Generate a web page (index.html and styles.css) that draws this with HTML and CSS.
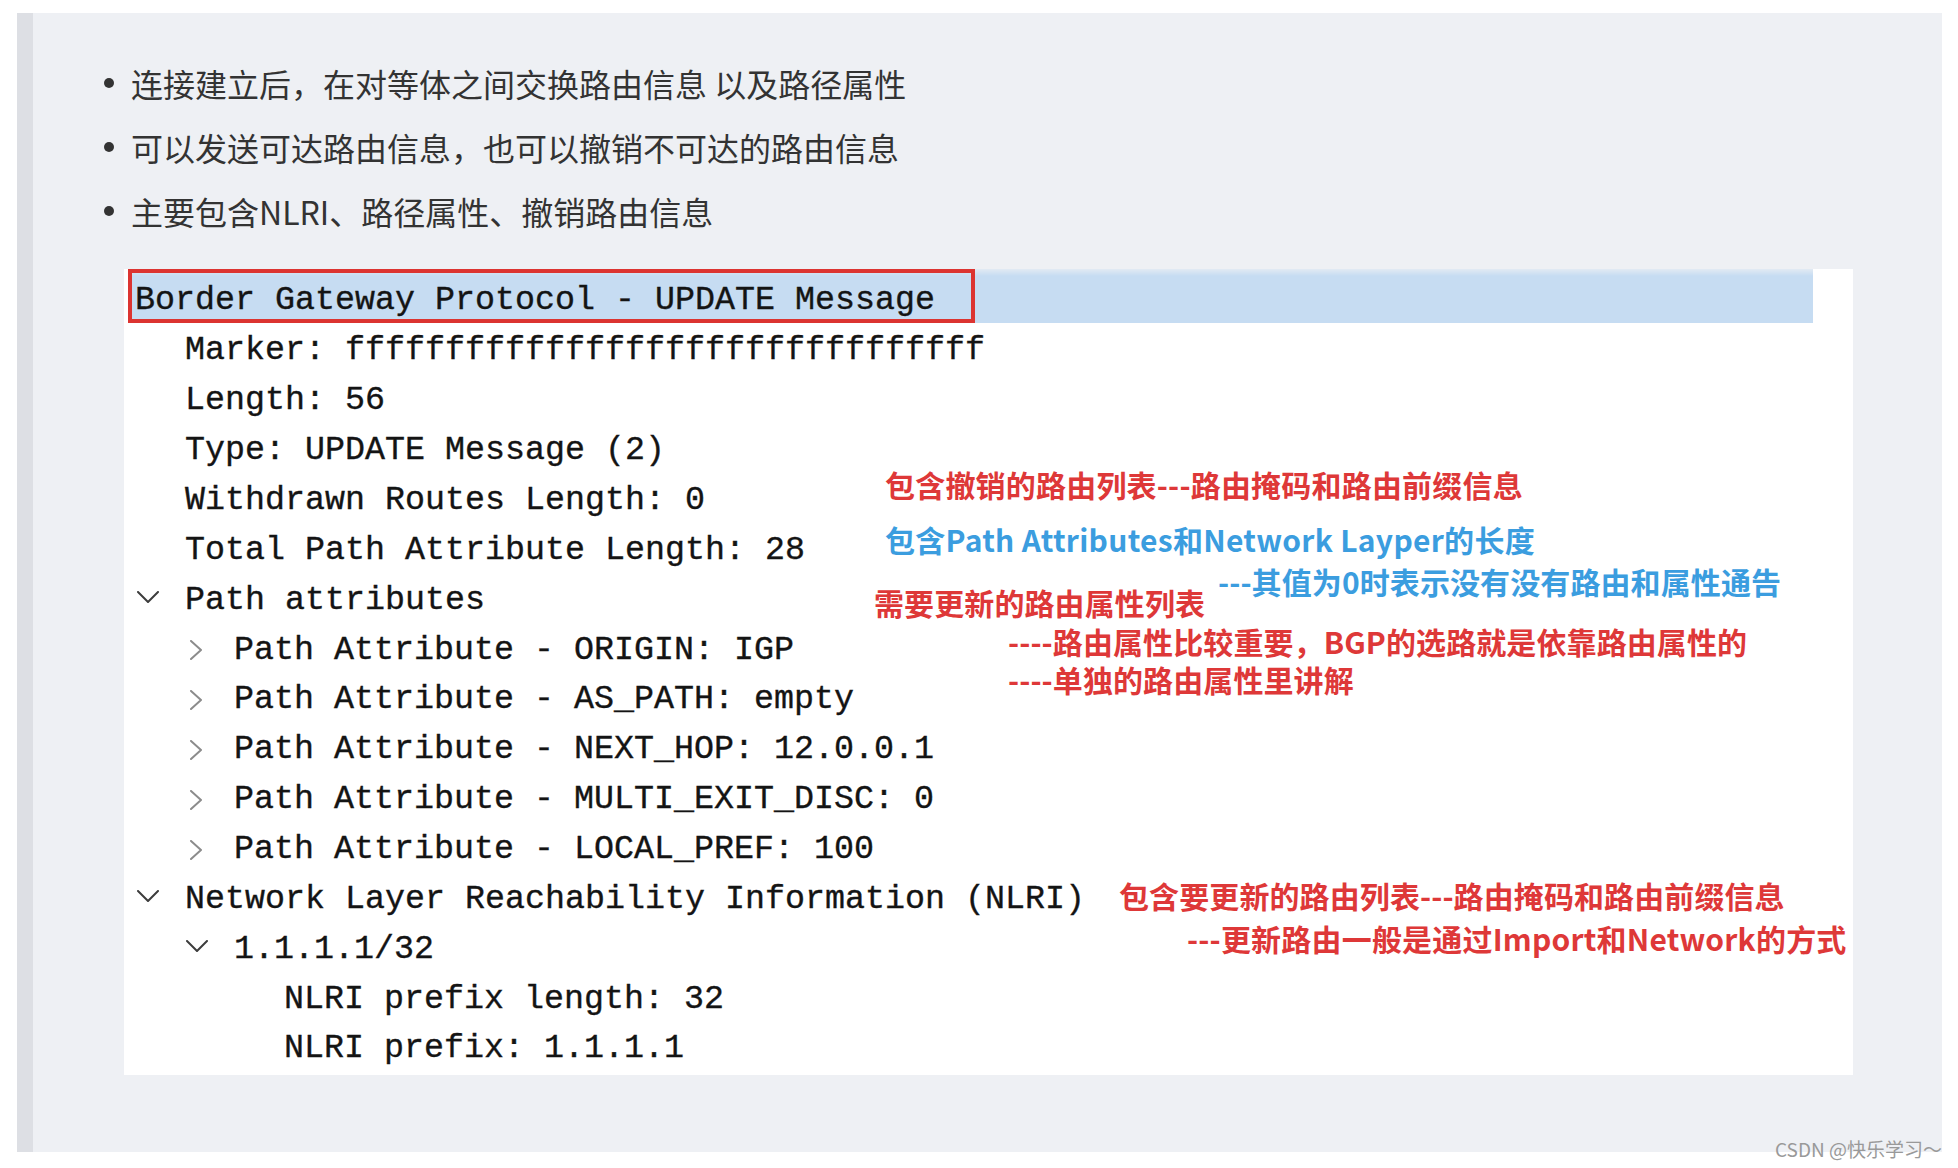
FILE: index.html
```html
<!DOCTYPE html>
<html lang="zh-CN">
<head>
<meta charset="utf-8">
<title>BGP UPDATE</title>
<link rel="stylesheet" href="styles.css">
</head>
<body>
<div class="page">
  <blockquote class="quote">
    <ul class="bullets">
      <li>连接建立后，在对等体之间交换路由信息 以及路径属性</li>
      <li>可以发送可达路由信息，也可以撤销不可达的路由信息</li>
      <li>主要包含NLRI、路径属性、撤销路由信息</li>
    </ul>
    <div class="shot">
      <div class="hdr"><span class="hl">Border Gateway Protocol - UPDATE Message</span></div>
      <div class="row l1"><span class="tw"></span><span>Marker: ffffffffffffffffffffffffffffffff</span></div>
      <div class="row l1"><span class="tw"></span><span>Length: 56</span></div>
      <div class="row l1"><span class="tw"></span><span>Type: UPDATE Message (2)</span></div>
      <div class="row l1"><span class="tw"></span><span>Withdrawn Routes Length: 0</span></div>
      <div class="row l1"><span class="tw"></span><span>Total Path Attribute Length: 28</span></div>
      <div class="row l1"><span class="tw"><svg class="open" viewBox="0 0 22 12"><polyline points="1,1 11,11 21,1"/></svg></span><span>Path attributes</span></div>
      <div class="row l2"><span class="tw"><svg class="closed" viewBox="0 0 22 20"><polyline points="5,1 15,10 5,19"/></svg></span><span>Path Attribute - ORIGIN: IGP</span></div>
      <div class="row l2"><span class="tw"><svg class="closed" viewBox="0 0 22 20"><polyline points="5,1 15,10 5,19"/></svg></span><span>Path Attribute - AS_PATH: empty</span></div>
      <div class="row l2"><span class="tw"><svg class="closed" viewBox="0 0 22 20"><polyline points="5,1 15,10 5,19"/></svg></span><span>Path Attribute - NEXT_HOP: 12.0.0.1</span></div>
      <div class="row l2"><span class="tw"><svg class="closed" viewBox="0 0 22 20"><polyline points="5,1 15,10 5,19"/></svg></span><span>Path Attribute - MULTI_EXIT_DISC: 0</span></div>
      <div class="row l2"><span class="tw"><svg class="closed" viewBox="0 0 22 20"><polyline points="5,1 15,10 5,19"/></svg></span><span>Path Attribute - LOCAL_PREF: 100</span></div>
      <div class="row l1"><span class="tw"><svg class="open" viewBox="0 0 22 12"><polyline points="1,1 11,11 21,1"/></svg></span><span>Network Layer Reachability Information (NLRI)</span></div>
      <div class="row l2"><span class="tw"><svg class="open" viewBox="0 0 22 12"><polyline points="1,1 11,11 21,1"/></svg></span><span>1.1.1.1/32</span></div>
      <div class="row l3"><span class="tw"></span><span>NLRI prefix length: 32</span></div>
      <div class="row l3"><span class="tw"></span><span>NLRI prefix: 1.1.1.1</span></div>

      <p class="note red n1">包含撤销的路由列表---路由掩码和路由前缀信息</p>
      <p class="note blue n2">包含Path Attributes和Network Layper的长度</p>
      <p class="note blue n3">---其值为0时表示没有没有路由和属性通告</p>
      <p class="note red n4">需要更新的路由属性列表</p>
      <p class="note red n5">----路由属性比较重要，BGP的选路就是依靠路由属性的</p>
      <p class="note red n6">----单独的路由属性里讲解</p>
      <p class="note red n7">包含要更新的路由列表---路由掩码和路由前缀信息</p>
      <p class="note red n8">---更新路由一般是通过Import和Network的方式</p>
    </div>
  </blockquote>
  <div class="wm">CSDN @快乐学习～</div>
</div>
</body>
</html>
```
FILE: styles.css
```css
html, body {
  margin: 0;
  padding: 0;
  background: #ffffff;
}

.page {
  position: relative;
  width: 1958px;
  height: 1168px;
  overflow: hidden;
}

.quote {
  margin: 13px 16px 0 17px;
  padding: 38px 0 77px 0;
  background: #eef0f4;
  border-left: 16px solid #dddfe4;
}

.bullets {
  list-style: none;
  margin: 0;
  padding: 0 0 0 71px;
  font-family: "Noto Sans CJK SC", "Noto Sans", sans-serif;
  font-size: 32px;
  color: #333333;
}

.bullets li {
  display: flex;
  align-items: center;
  height: 64px;
  line-height: 64px;
}

.bullets li::before {
  content: "";
  flex: none;
  width: 10px;
  height: 10px;
  border-radius: 50%;
  background: #333333;
  margin-right: 17px;
}

.shot {
  position: relative;
  margin: 26px 0 0 91px;
  width: 1729px;
  height: 806px;
  background: #ffffff;
  font-family: "Liberation Mono", "DejaVu Sans Mono", monospace;
  font-size: 33.33px;
  color: #141414;
  -webkit-text-stroke: 0.35px #141414;
}

.hdr {
  margin: 0 40px 0 4px;
  height: 54px;
  background: linear-gradient(#e2eaf3 0, #c6dcf2 7px, #c6dcf2 100%);
}

.hl {
  display: inline-block;
  box-sizing: border-box;
  width: 847px;
  height: 54px;
  border: 4px solid #dc3431;
  padding: 8px 0 0 3px;
  line-height: 38px;
  white-space: pre;
}

.row {
  display: flex;
  align-items: center;
  box-sizing: border-box;
  width: fit-content;
  height: 49.87px;
  padding-top: 6px;
  line-height: 43px;
  white-space: pre;
}

.l1 { padding-left: 12px; }
.l2 { padding-left: 61px; }
.l3 { padding-left: 111px; }

.tw {
  flex: none;
  width: 49px;
  height: 43px;
  display: flex;
  align-items: center;
  padding-left: 1px;
  box-sizing: border-box;
  -webkit-text-stroke: 0;
}

.tw svg polyline {
  fill: none;
  stroke-width: 2;
  stroke-linecap: round;
  stroke-linejoin: round;
}

.tw svg.open {
  width: 22px;
  height: 12px;
  margin-top: -7px;
}
.tw svg.open polyline { stroke: #3d3d3d; }

.tw svg.closed {
  width: 22px;
  height: 20px;
}
.tw svg.closed polyline { stroke: #8c8c8c; }

.note {
  position: absolute;
  margin: 0;
  font-family: "Noto Sans CJK SC", "Noto Sans", sans-serif;
  font-weight: 700;
  font-size: 30px;
  line-height: 1;
  white-space: nowrap;
  letter-spacing: 0.1px;
  -webkit-text-stroke: 0;
}

.red { color: #de3838; }
.blue { color: #3b9ddf; }

.n1 { left: 761px; top: 200px; letter-spacing: 0.2px; }
.n2 { left: 761px; top: 255px; letter-spacing: 0.3px; }
.n3 { left: 1094px; top: 297px; }
.n4 { left: 750px; top: 318px; }
.n5 { left: 884px; top: 357px; }
.n6 { left: 884px; top: 395px; }
.n7 { left: 995px; top: 611px; }
.n8 { left: 1063px; top: 654px; letter-spacing: 0.2px; }

.wm {
  position: absolute;
  right: 16px;
  top: 1136px;
  font-family: "Noto Sans CJK SC", "Noto Sans", sans-serif;
  font-size: 19px;
  line-height: 26px;
  color: #999999;
}
```
